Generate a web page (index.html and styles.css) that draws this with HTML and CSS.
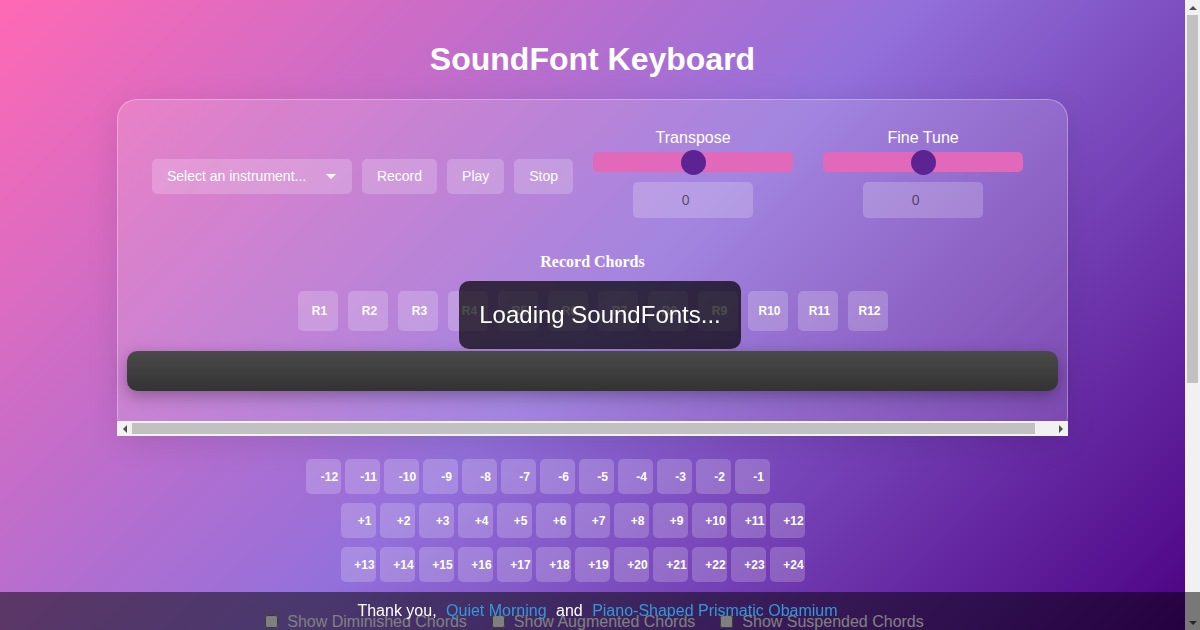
FILE: index.html
```html
<!DOCTYPE html>
<html lang="en">

<head>
    <meta charset="UTF-8">
    <meta name="viewport" content="width=device-width, initial-scale=1.0">
    <title>SoundFont Keyboard</title>
    <link rel="stylesheet" href="styles.css">
</head>

<body>
    <h1>SoundFont Keyboard</h1>

    <div class="panel">
        <div class="controls">
            <div class="select-wrap">
                <select id="instrument" class="instrument">
                    <option value="">Select an instrument...</option>
                </select>
            </div>
            <button class="ctrl-btn" id="record">Record</button>
            <button class="ctrl-btn" id="play">Play</button>
            <button class="ctrl-btn" id="stop">Stop</button>

            <div class="slider-group">
                <label for="transpose">Transpose</label>
                <input type="range" id="transpose" min="-12" max="12" value="0">
                <input type="number" class="slider-value" id="transpose-value" value="0">
            </div>
            <div class="slider-group">
                <label for="fine-tune">Fine Tune</label>
                <input type="range" id="fine-tune" min="-100" max="100" value="0">
                <input type="number" class="slider-value" id="fine-tune-value" value="0">
            </div>
        </div>

        <div class="record-chords">
            <h4>Record Chords</h4>
            <div class="record-slots" id="record-slots"></div>
        </div>

        <div class="keyboard" id="keyboard"></div>

        <!-- 键盘横向滚动条 -->
        <div class="hscroll">
            <span class="scroll-btn"><span class="arrow arrow-left"></span></span>
            <span class="hscroll-track"><span class="hscroll-thumb"></span></span>
            <span class="scroll-btn"><span class="arrow arrow-right"></span></span>
        </div>
    </div>

    <div class="offsets">
        <div class="offset-row offset-row-neg" id="offsets-neg"></div>
        <div class="offset-row" id="offsets-low"></div>
        <div class="offset-row" id="offsets-high"></div>
    </div>

    <div class="chord-toggles">
        <label><input type="checkbox" id="show-dim">Show Diminished Chords</label>
        <label><input type="checkbox" id="show-aug">Show Augmented Chords</label>
        <label><input type="checkbox" id="show-sus">Show Suspended Chords</label>
    </div>

    <!-- 页面滚动条 -->
    <div class="vscroll">
        <span class="scroll-btn"><span class="arrow arrow-up"></span></span>
        <span class="vscroll-track"><span class="vscroll-thumb"></span></span>
        <span class="scroll-btn"><span class="arrow arrow-down"></span></span>
    </div>

    <!-- 加载提示 -->
    <div class="loading">
        <div class="loading-box">Loading SoundFonts...</div>
    </div>

    <footer>
        Thank you, <a href="#">Quiet Morning</a> and <a href="#">Piano-Shaped Prismatic Obamium</a>
    </footer>

    <script>
        const notes = ["C", "C#", "D", "D#", "E", "F", "F#", "G", "G#", "A", "A#", "B"];

        function makeButtons(id, labels, className) {
            const box = document.getElementById(id);
            labels.forEach(text => {
                const btn = document.createElement("button");
                btn.className = className;
                btn.textContent = text;
                box.appendChild(btn);
            });
        }

        // 录音槽位
        makeButtons("record-slots", notes.map((n, i) => "R" + (i + 1)), "slot-btn");

        // 移调按钮
        makeButtons("offsets-neg", notes.map((n, i) => String(i - 12)), "offset-btn");
        makeButtons("offsets-low", notes.map((n, i) => "+" + (i + 1)), "offset-btn");
        makeButtons("offsets-high", notes.map((n, i) => "+" + (i + 13)), "offset-btn");

        // 滑块同步
        ["transpose", "fine-tune"].forEach(id => {
            const range = document.getElementById(id);
            const value = document.getElementById(id + "-value");
            range.addEventListener("input", () => value.value = range.value);
            value.addEventListener("change", () => range.value = value.value);
        });
    </script>
</body>

</html>
```

FILE: styles.css
```css
body {
    font-family: "Liberation Sans", Arial, sans-serif;
    margin: 0;
    padding: 20px 35px 60px 20px;
    /* 右侧留出滚动条宽度 */
    color: #fff;
    background: linear-gradient(135deg, #ff69b4, #9370db, #4b0082);
    background-attachment: fixed;
}

h1 {
    text-align: center;
    font-size: 32px;
    margin: 21px 0;
}

.panel {
    box-sizing: border-box;
    max-width: 951px;
    margin: 0 auto;
    padding: 29px 10px 0;
    background-color: rgba(255, 255, 255, 0.15);
    border: 1px solid rgba(255, 255, 255, 0.3);
    border-radius: 20px;
    box-shadow: 0 8px 32px rgba(0, 0, 0, 0.1);
}

.controls {
    display: flex;
    justify-content: center;
    align-items: center;
    gap: 10px;
}

.select-wrap {
    position: relative;
    margin-top: 5px;
}

.select-wrap::after {
    content: "";
    position: absolute;
    right: 16px;
    top: 15px;
    border-left: 5px solid transparent;
    border-right: 5px solid transparent;
    border-top: 5px solid #fff;
    pointer-events: none;
}

.instrument,
.ctrl-btn {
    height: 35px;
    border: none;
    border-radius: 5px;
    background-color: rgba(255, 255, 255, 0.2);
    color: #fff;
    font-family: inherit;
    font-size: 14px;
}

.instrument {
    -webkit-appearance: none;
    appearance: none;
    display: block;
    width: 200px;
    padding: 0 15px;
    outline: none;
}

.instrument option {
    color: #333;
}

.ctrl-btn {
    margin-top: 5px;
    padding: 0 15px;
    cursor: pointer;
}

.ctrl-btn:hover {
    background-color: rgba(255, 255, 255, 0.3);
}

.slider-group {
    display: flex;
    flex-direction: column;
    align-items: center;
    margin: 0 10px;
}

.slider-group label {
    font-size: 16px;
    margin-bottom: 5px;
}

.slider-group input[type="range"] {
    -webkit-appearance: none;
    appearance: none;
    width: 200px;
    height: 20px;
    margin: 0;
    background-color: #e268b9;
    border-radius: 5px;
    outline: none;
}

.slider-group input[type="range"]::-webkit-slider-thumb {
    -webkit-appearance: none;
    width: 25px;
    height: 25px;
    border-radius: 50%;
    background-color: #5c2392;
    cursor: pointer;
}

.slider-value {
    box-sizing: border-box;
    width: 120px;
    height: 36px;
    margin-top: 10px;
    border: none;
    border-radius: 5px;
    background-color: rgba(255, 255, 255, 0.2);
    color: rgba(0, 0, 0, 0.55);
    font-family: inherit;
    font-size: 14px;
    text-align: center;
}

.record-chords {
    margin-top: 35px;
}

.record-chords h4 {
    font-family: "Liberation Serif", "Times New Roman", serif;
    font-size: 16px;
    text-align: center;
    margin: 0 0 20px;
}

.record-slots {
    display: flex;
    justify-content: center;
    gap: 10px;
}

.slot-btn {
    width: 40px;
    height: 40px;
    padding: 0 0 0 4px;
    border: none;
    border-radius: 5px;
    background-color: rgba(255, 255, 255, 0.2);
    color: #fff;
    font-family: inherit;
    font-size: 12px;
    font-weight: bold;
    white-space: nowrap;
    cursor: pointer;
}

.keyboard {
    height: 40px;
    margin: 20px -1px 0;
    background: linear-gradient(#4a4a4a, #333);
    border-radius: 10px;
    box-shadow: 0 5px 15px rgba(0, 0, 0, 0.3);
}

/* 滚动条 */
.hscroll {
    display: flex;
    height: 15px;
    margin: 30px -11px -1px;
    background-color: #f1f1f1;
}

.vscroll {
    position: fixed;
    top: 0;
    right: 0;
    width: 15px;
    height: 100vh;
    display: flex;
    flex-direction: column;
    background-color: #f1f1f1;
    z-index: 5;
}

.scroll-btn {
    flex: 0 0 15px;
    display: flex;
    align-items: center;
    justify-content: center;
}

.hscroll-track {
    flex: 1;
    padding: 2px 0;
}

.hscroll-thumb {
    display: block;
    width: 98%;
    height: 100%;
    background-color: #c1c1c1;
}

.vscroll-track {
    flex: 1;
    padding: 0 2px;
}

.vscroll-thumb {
    display: block;
    height: 61.3%;
    background-color: #c1c1c1;
}

.arrow {
    width: 0;
    height: 0;
}

.arrow-left {
    border-top: 4px solid transparent;
    border-bottom: 4px solid transparent;
    border-right: 4px solid #505050;
}

.arrow-right {
    border-top: 4px solid transparent;
    border-bottom: 4px solid transparent;
    border-left: 4px solid #505050;
}

.arrow-up {
    border-left: 4px solid transparent;
    border-right: 4px solid transparent;
    border-bottom: 4px solid #505050;
}

.arrow-down {
    border-left: 4px solid transparent;
    border-right: 4px solid transparent;
    border-top: 4px solid #505050;
}

.offsets {
    width: 503px;
    margin: 23px auto 0;
    display: flex;
    flex-direction: column;
    gap: 9px;
}

.offset-row {
    display: flex;
    gap: 4px;
}

.offset-row-neg {
    margin-left: -35px;
}

.offset-btn {
    width: 35px;
    height: 35px;
    padding: 0 0 0 12px;
    border: none;
    border-radius: 5px;
    background-color: rgba(255, 255, 255, 0.2);
    color: #fff;
    font-family: inherit;
    font-size: 12px;
    font-weight: bold;
    white-space: nowrap;
    cursor: pointer;
}

.chord-toggles {
    display: flex;
    justify-content: center;
    gap: 21px;
    margin-top: 30px;
    font-size: 16px;
}

.chord-toggles label {
    display: flex;
    align-items: center;
    gap: 6px;
}

/* 加载提示 */
.loading {
    position: fixed;
    top: 0;
    left: 0;
    width: 100vw;
    height: 100vh;
    display: flex;
    align-items: center;
    justify-content: center;
    pointer-events: none;
    z-index: 20;
}

.loading-box {
    padding: 20px;
    background-color: rgba(0, 0, 0, 0.7);
    border-radius: 10px;
    font-size: 24px;
}

footer {
    position: fixed;
    left: 0;
    bottom: 0;
    width: 100vw;
    padding: 10px 0;
    text-align: center;
    font-size: 16px;
    background-color: rgba(0, 0, 0, 0.5);
    z-index: 10;
}

footer a {
    color: #3498db;
    text-decoration: none;
    margin: 0 5px;
}
```
